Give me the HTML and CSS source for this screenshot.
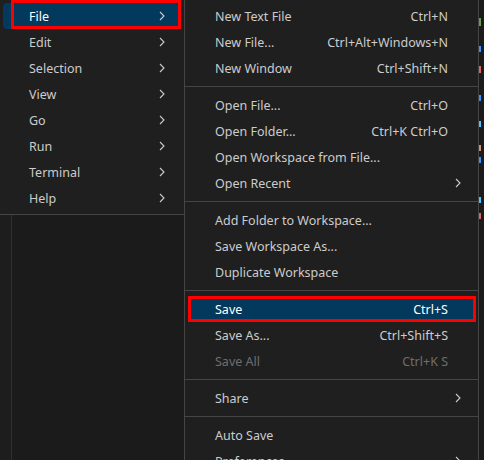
FILE: index.html
```html
<!DOCTYPE html>
<html>
<head>
<meta charset="utf-8">
<link rel="stylesheet" href="styles.css">
</head>
<body>
<div class="screen">
  <div class="left-col">
    <div class="menu main-menu">
      <div class="item active"><span class="label">File</span><svg class="chev" viewBox="0 0 6 10"><polyline points="1,1 5,5 1,9"/></svg></div>
      <div class="item"><span class="label">Edit</span><svg class="chev" viewBox="0 0 6 10"><polyline points="1,1 5,5 1,9"/></svg></div>
      <div class="item"><span class="label">Selection</span><svg class="chev" viewBox="0 0 6 10"><polyline points="1,1 5,5 1,9"/></svg></div>
      <div class="item"><span class="label">View</span><svg class="chev" viewBox="0 0 6 10"><polyline points="1,1 5,5 1,9"/></svg></div>
      <div class="item"><span class="label">Go</span><svg class="chev" viewBox="0 0 6 10"><polyline points="1,1 5,5 1,9"/></svg></div>
      <div class="item"><span class="label">Run</span><svg class="chev" viewBox="0 0 6 10"><polyline points="1,1 5,5 1,9"/></svg></div>
      <div class="item"><span class="label">Terminal</span><svg class="chev" viewBox="0 0 6 10"><polyline points="1,1 5,5 1,9"/></svg></div>
      <div class="item"><span class="label">Help</span><svg class="chev" viewBox="0 0 6 10"><polyline points="1,1 5,5 1,9"/></svg></div>
      <div class="mark-file"></div>
    </div>
    <div class="below">
      <div class="gutter"></div>
      <div class="editor-area"></div>
    </div>
  </div>
  <div class="menu sub-menu">
    <div class="item"><span class="label">New Text File</span><span class="key">Ctrl+N</span></div>
    <div class="item"><span class="label">New File...</span><span class="key">Ctrl+Alt+Windows+N</span></div>
    <div class="item"><span class="label">New Window</span><span class="key">Ctrl+Shift+N</span></div>
    <div class="sep"></div>
    <div class="item"><span class="label">Open File...</span><span class="key">Ctrl+O</span></div>
    <div class="item"><span class="label">Open Folder...</span><span class="key">Ctrl+K Ctrl+O</span></div>
    <div class="item"><span class="label">Open Workspace from File...</span></div>
    <div class="item"><span class="label">Open Recent</span><svg class="chev" viewBox="0 0 6 10"><polyline points="1,1 5,5 1,9"/></svg></div>
    <div class="sep"></div>
    <div class="item"><span class="label">Add Folder to Workspace...</span></div>
    <div class="item"><span class="label">Save Workspace As...</span></div>
    <div class="item"><span class="label">Duplicate Workspace</span></div>
    <div class="sep"></div>
    <div class="item active marked"><span class="label">Save</span><span class="key">Ctrl+S</span></div>
    <div class="item"><span class="label">Save As...</span><span class="key">Ctrl+Shift+S</span></div>
    <div class="item disabled"><span class="label">Save All</span><span class="key">Ctrl+K S</span></div>
    <div class="sep"></div>
    <div class="item"><span class="label">Share</span><svg class="chev" viewBox="0 0 6 10"><polyline points="1,1 5,5 1,9"/></svg></div>
    <div class="sep"></div>
    <div class="item"><span class="label">Auto Save</span></div>
    <div class="item"><span class="label">Preferences</span><svg class="chev" viewBox="0 0 6 10"><polyline points="1,1 5,5 1,9"/></svg></div>
  </div>
  <div class="code-strip">
    <span class="c c1"></span>
    <span class="c c2"></span>
    <span class="c c3"></span>
    <span class="c c4"></span>
    <span class="c c5"></span>
    <span class="c c6"></span>
    <span class="c c7"></span>
    <span class="c c8"></span>
    <span class="c c9"></span>
  </div>
</div>
</body>
</html>
```
FILE: styles.css
```css
html, body {
  margin: 0;
  padding: 0;
  background: #1b1b1b;
}
.screen {
  display: flex;
  width: 484px;
  height: 460px;
  overflow: hidden;
  font-family: "Noto Sans", "Open Sans", sans-serif;
  font-size: 12.5px;
  color: #cccccc;
}
.left-col {
  width: 184px;
  display: flex;
  flex-direction: column;
  flex: none;
}
.menu {
  background: #1f1f1f;
  box-sizing: border-box;
}
.main-menu {
  position: relative;
  height: 215px;
  padding: 3px 4px 0 3px;
  border-bottom: 1px solid #454545;
}
.below {
  flex: 1;
  display: flex;
}
.gutter {
  width: 11px;
  border-right: 1px solid #2f2f2f;
  background: #1d1d1d;
}
.editor-area {
  flex: 1;
  background: #1b1b1b;
}
.item {
  height: 26px;
  display: flex;
  align-items: center;
  box-sizing: border-box;
  border-radius: 4px;
  white-space: nowrap;
}
.main-menu .item {
  padding: 0 15px 0 26px;
}
.label {
  flex: 1;
}
.chev {
  width: 6px;
  height: 10px;
  fill: none;
  stroke: #cccccc;
  stroke-width: 1.1;
}
.item.active {
  background: #04395e;
  color: #ffffff;
}
.mark-file {
  position: absolute;
  left: 11px;
  top: 0;
  width: 170px;
  height: 29px;
  box-sizing: border-box;
  border: 3px solid #ff0000;
}
.sub-menu {
  width: 295px;
  flex: none;
  border-left: 1px solid #454545;
  border-right: 1px solid #454545;
  padding: 3px 2px 0 3px;
}
.sub-menu .item {
  padding: 0 12px 0 27px;
}
.sub-menu .chev {
  margin-right: 3px;
}
.key {
  margin-left: 20px;
  margin-right: 16px;
}
.item.marked {
  border: 3px solid #ff0000;
  border-radius: 0;
  padding-left: 24px;
}
.item.marked .key {
  margin-right: 13px;
}
.item.disabled {
  color: #6e6e6e;
}
.sep {
  height: 1px;
  background: #454545;
  margin: 5px -2px 5px -3px;
}
.code-strip {
  flex: 1;
  display: flex;
  flex-direction: column;
  align-items: flex-start;
  background: #1b1b1b;
}
.c {
  display: block;
  width: 2px;
  height: 6px;
}
.c1 { margin-top: 18px; background: #6a9955; height: 8px; }
.c2 { margin-top: 20px; background: #3794ff; }
.c3 { margin-top: 14px; background: #d16969; height: 7px; }
.c4 { margin-top: 22px; background: #3794ff; }
.c5 { margin-top: 20px; background: #4fc1ff; }
.c6 { margin-top: 18px; background: #ce9178; }
.c7 { margin-top: 6px; background: #3794ff; }
.c8 { margin-top: 34px; background: #4fc1ff; }
.c9 { margin-top: 10px; background: #d16969; }
```
